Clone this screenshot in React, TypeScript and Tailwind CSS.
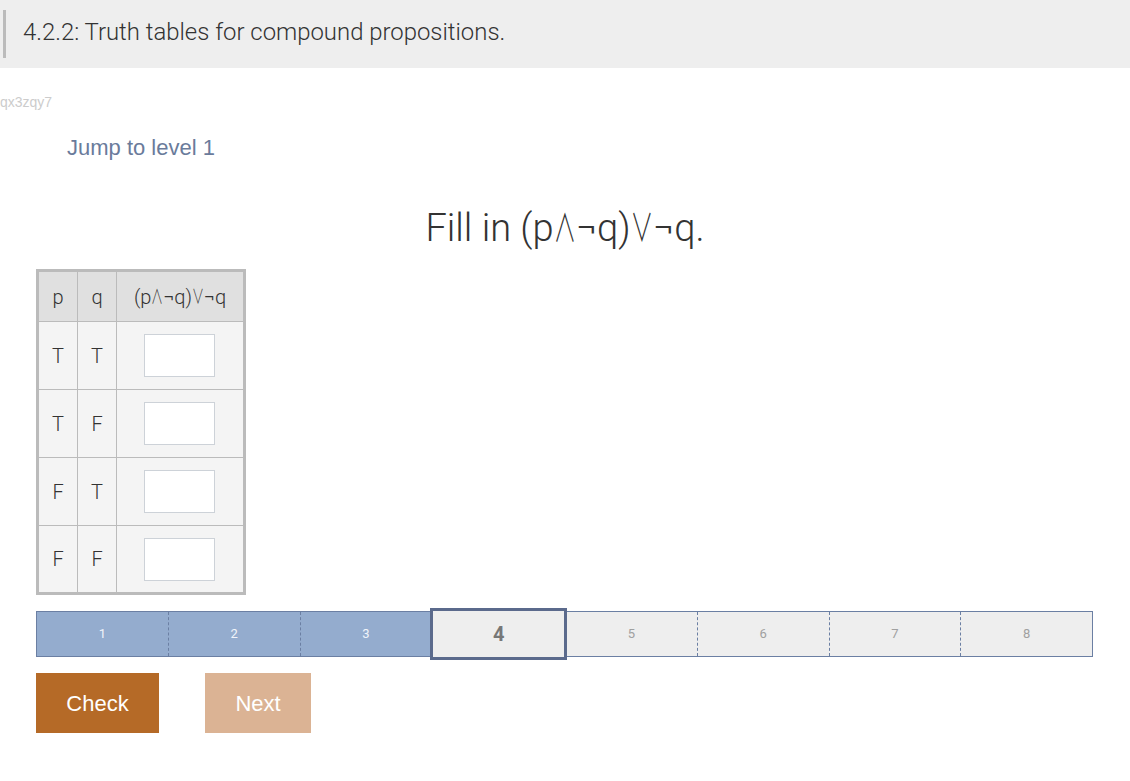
import React from 'react';

const roboto = { fontFamily: 'Roboto, "Noto Sans", sans-serif' };

const rows: [string, string][] = [
  ['T', 'T'],
  ['T', 'F'],
  ['F', 'T'],
  ['F', 'F'],
];

const levels = [1, 2, 3, 4, 5, 6, 7, 8];
const current = 4;

// Roboto lacks the logic glyphs; the CJK font has thin ones but full-width, so squeeze them
function Op({ c }: { c: string }) {
  return (
    <span
      className="inline-block leading-none scale-x-[0.6] -mx-[0.2em]"
      style={{ fontFamily: '"Noto Sans CJK SC", sans-serif' }}
    >
      {c}
    </span>
  );
}

function Expr() {
  return (
    <>
      (p<Op c="∧" />¬q)<Op c="∨" />¬q
    </>
  );
}

function LevelBar() {
  return (
    <div className="flex h-[46px] border border-[#6b7fa3] ml-[36px] w-[1057px]">
      {levels.map((n, i) => {
        const done = n < current;
        const active = n === current;
        const dashed = i > 0 && n !== current && n !== current + 1;
        if (active) {
          return (
            <div
              key={n}
              className="relative z-10 flex-1 -my-[4px] -mx-[1px] flex items-center justify-center border-[3px] border-[#5b6a8c] bg-[#eeeeee] text-[20px] font-bold text-[#777]"
              style={roboto}
            >
              {n}
            </div>
          );
        }
        return (
          <div
            key={n}
            className={`flex-1 flex items-center justify-center text-[13px] ${
              done ? 'bg-[#94acce] text-[#f0f4fa]' : 'bg-[#eeeeee] text-[#a0a0a0]'
            } ${dashed ? 'border-l border-dashed border-[#6b7fa3]' : ''}`}
            style={roboto}
          >
            {n}
          </div>
        );
      })}
    </div>
  );
}

export default function App() {
  return (
    <div className="min-h-screen bg-white text-[#333]" style={{ fontFamily: '"Liberation Sans", Arial, sans-serif' }}>
      <div className="h-[68px] bg-[#eeeeee] flex items-center pl-[3px]">
        <div className="h-[48px] border-l-[3px] border-[#bbbbbb] flex items-center pl-[17px]">
          <span className="text-[23.9px] font-light text-[#333] -mt-[2px]" style={roboto}>
            4.2.2: Truth tables for compound propositions.
          </span>
        </div>
      </div>

      <div className="pt-[26px] text-[14px] leading-[16px] text-[#cccccc]">qx3zqy7</div>

      <div className="pt-[25px] pl-[67px] text-[22px] leading-[26px] text-[#6a7b9b]">Jump to level 1</div>

      <div className="pt-[44px] h-[90px] text-center text-[38px] leading-[46px] font-light text-[#333]" style={roboto}>
        Fill in <Expr />.
      </div>

      <div className="pt-[18px] pl-[36px]">
        <table className="border-collapse border-[3px] border-[#bbbbbb] text-[20px] font-light text-[#333]" style={roboto}>
          <thead>
            <tr className="bg-[#e0e0e0] h-[51px]">
              <th className="border border-[#bbbbbb] w-[40px] font-light">p</th>
              <th className="border border-[#bbbbbb] w-[39px] font-light">q</th>
              <th className="border border-[#bbbbbb] w-[128px] font-light">
                <Expr />
              </th>
            </tr>
          </thead>
          <tbody>
            {rows.map(([p, q], i) => (
              <tr key={i} className="bg-[#f4f4f4] h-[68px]">
                <td className="border border-[#bbbbbb] text-center">{p}</td>
                <td className="border border-[#bbbbbb] text-center">{q}</td>
                <td className="border border-[#bbbbbb]">
                  <div className="flex justify-center pr-[2px]">
                    <input
                      type="text"
                      className="w-[71px] h-[43px] bg-white border border-[#cdd2d8] outline-none"
                    />
                  </div>
                </td>
              </tr>
            ))}
          </tbody>
        </table>
      </div>

      <div className="pt-[16px]">
        <LevelBar />
      </div>

      <div className="pt-[16px] pl-[36px] flex gap-[46px]">
        <button className="w-[123px] h-[60px] bg-[#b56a27] text-white text-[22px]">Check</button>
        <button className="w-[106px] h-[60px] bg-[#dbb394] text-white text-[22px]">Next</button>
      </div>
    </div>
  );
}
